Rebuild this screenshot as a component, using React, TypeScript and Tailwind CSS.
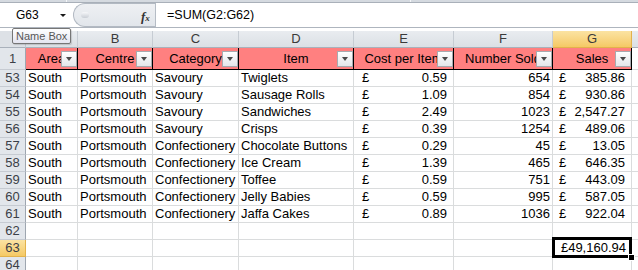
import React from "react";

type Col = { key: string; w: string; hdr: string };

const COLS: Col[] = [
  { key: "A", w: "w-[52px]", hdr: "Area" },
  { key: "B", w: "w-[75px]", hdr: "Centre" },
  { key: "C", w: "w-[86px]", hdr: "Category" },
  { key: "D", w: "w-[115px]", hdr: "Item" },
  { key: "E", w: "w-[100px]", hdr: "Cost per Item" },
  { key: "F", w: "w-[99px]", hdr: "Number Sold" },
  { key: "G", w: "w-[79px]", hdr: "Sales" },
];

type Row = {
  n: number;
  cat: string;
  item: string;
  cost: string;
  num: string;
  sales: string;
};

const ROWS: Row[] = [
  { n: 53, cat: "Savoury", item: "Twiglets", cost: "0.59", num: "654", sales: "385.86" },
  { n: 54, cat: "Savoury", item: "Sausage Rolls", cost: "1.09", num: "854", sales: "930.86" },
  { n: 55, cat: "Savoury", item: "Sandwiches", cost: "2.49", num: "1023", sales: "2,547.27" },
  { n: 56, cat: "Savoury", item: "Crisps", cost: "0.39", num: "1254", sales: "489.06" },
  { n: 57, cat: "Confectionery", item: "Chocolate Buttons", cost: "0.29", num: "45", sales: "13.05" },
  { n: 58, cat: "Confectionery", item: "Ice Cream", cost: "1.39", num: "465", sales: "646.35" },
  { n: 59, cat: "Confectionery", item: "Toffee", cost: "0.59", num: "751", sales: "443.09" },
  { n: 60, cat: "Confectionery", item: "Jelly Babies", cost: "0.59", num: "995", sales: "587.05" },
  { n: 61, cat: "Confectionery", item: "Jaffa Cakes", cost: "0.89", num: "1036", sales: "922.04" },
];

const cell =
  "h-[17px] shrink-0 border-r border-b border-[#dadcdd] overflow-hidden whitespace-nowrap leading-[16px] text-black";

function RowHeader({ n, sel }: { n: number; sel?: boolean }) {
  return (
    <div
      className={
        sel
          ? "w-[26px] h-[17px] shrink-0 border-r border-b border-[#e2b24c] bg-gradient-to-b from-[#fbe3a2] to-[#f5c964] text-center leading-[16px] text-[#3b3f47]"
          : "w-[26px] h-[17px] shrink-0 border-r border-b border-r-[#9ea6b0] border-b-[#c6cbd2] bg-[#e2e6eb] text-center leading-[16px] text-[#3b3f47]"
      }
    >
      {n}
    </div>
  );
}

function FilterBtn() {
  return (
    <div className="absolute right-0 bottom-[2px] w-[16px] h-[16px] border border-[#a7abb0] bg-gradient-to-b from-[#ffffff] to-[#e4e6e9] flex items-center justify-center">
      <div className="w-0 h-0 border-l-[3.5px] border-r-[3.5px] border-t-[4px] border-l-transparent border-r-transparent border-t-[#4a4a4a]" />
    </div>
  );
}

function DataRow({ r }: { r: Row }) {
  return (
    <div className="flex h-[17px]">
      <RowHeader n={r.n} />
      <div className={`${cell} w-[52px] pl-[2px]`}>South</div>
      <div className={`${cell} w-[75px] pl-[2px]`}>Portsmouth</div>
      <div className={`${cell} w-[86px] pl-[2px]`}>{r.cat}</div>
      <div className={`${cell} w-[115px] pl-[2px]`}>{r.item}</div>
      <div className={`${cell} w-[100px] pl-[8px] pr-[6px] flex justify-between`}>
        <span>£</span>
        <span>{r.cost}</span>
      </div>
      <div className={`${cell} w-[99px] pr-[2px] text-right`}>{r.num}</div>
      <div className={`${cell} w-[79px] pl-[6px] pr-[6px] flex justify-between`}>
        <span>£</span>
        <span>{r.sales}</span>
      </div>
      <div className={`${cell} flex-1 border-r-0`} />
    </div>
  );
}

function EmptyRow({ n, sel, total }: { n: number; sel?: boolean; total?: boolean }) {
  return (
    <div className="flex h-[17px]">
      <RowHeader n={n} sel={sel} />
      <div className={`${cell} w-[52px]`} />
      <div className={`${cell} w-[75px]`} />
      <div className={`${cell} w-[86px]`} />
      <div className={`${cell} w-[115px]`} />
      <div className={`${cell} w-[100px]`} />
      <div className={`${cell} w-[99px]`} />
      {total ? (
        <div className="relative h-[17px] w-[79px] shrink-0 border-r border-b border-[#dadcdd] leading-[16px] text-black">
          <div className="text-right pr-[5px] whitespace-nowrap overflow-hidden">£49,160.94</div>
          <div className="absolute left-[-1px] right-[-1px] top-[-3px] bottom-[-2px] border-[3px] border-black z-10" />
          <div className="absolute left-[75px] top-[14px] w-[7px] h-[7px] bg-black border border-white z-20" />
        </div>
      ) : (
        <div className={`${cell} w-[79px]`} />
      )}
      <div className={`${cell} flex-1 border-r-0`} />
    </div>
  );
}

export default function App() {
  return (
    <div className="relative w-[638px] h-[270px] overflow-hidden bg-white font-['Liberation_Sans',Arial,sans-serif] text-[13px]">
      {/* ribbon bottom strip */}
      <div className="flex h-[3px] bg-[#d5dae0] border-b border-[#a9b0b9]">
        <div className="w-[67px] border-r border-[#f4f6f8]" />
        <div className="w-[344px] border-r border-[#f4f6f8]" />
      </div>

      {/* formula bar */}
      <div className="flex h-[25px] bg-white border-b border-[#aeb5be]">
        <div className="relative w-[73px] h-full flex items-center">
          <span className="ml-[16px] text-[12px] text-black">G63</span>
          <div className="absolute left-[60px] top-[11px] w-0 h-0 border-l-[3px] border-r-[3px] border-t-[3px] border-l-transparent border-r-transparent border-t-[#1a1a1a]" />
        </div>
        <div className="relative w-[82px] h-full rounded-l-full border border-r-0 border-[#b2b9c2] bg-gradient-to-b from-[#eef0f3] to-[#e2e6eb]">
          <div className="absolute left-[7px] top-[8px] w-[8px] h-[6px] rounded-full bg-gradient-to-b from-[#f7f8fa] to-[#c9ced5]" />
          <span className="absolute left-[67px] top-[3px] font-['Liberation_Serif',serif] italic font-bold text-[13px] text-[#333]">
            f<span className="text-[9px]">x</span>
          </span>
        </div>
        <div className="flex-1 h-full border-l border-[#b5bcc5] pl-[11px] flex items-center text-[12.5px] text-black">
          =SUM(G2:G62)
        </div>
      </div>

      <div className="h-[3px] bg-white" />

      {/* column headers */}
      <div className="flex h-[17px]">
        <div className="w-[26px] h-[17px] shrink-0 border-r border-b border-r-[#c3c9d0] border-b-[#a9b1bb] bg-[#dde1e6]" />
        {COLS.map((c) =>
          c.key === "G" ? (
            <div
              key={c.key}
              className="w-[79px] h-[17px] shrink-0 border-r border-b border-[#e2b24c] bg-gradient-to-b from-[#fbe3a2] to-[#f5c964] text-center leading-[16px] text-[#3a3a3a]"
            >
              {c.key}
            </div>
          ) : (
            <div
              key={c.key}
              className={`${c.w} h-[17px] shrink-0 border-r border-b border-r-[#c6ccd3] border-b-[#a9b1bb] bg-gradient-to-b from-[#e9ecf0] to-[#dbe0e5] text-center leading-[16px] text-[#3a3a3a]`}
            >
              {c.key}
            </div>
          )
        )}
        <div className="flex-1 h-[17px] border-b border-[#a9b1bb] bg-gradient-to-b from-[#e9ecf0] to-[#dbe0e5]" />
      </div>

      {/* row 1: table headers */}
      <div className="flex h-[22px]">
        <div className="w-[26px] h-[22px] shrink-0 border-r border-b border-r-[#9ea6b0] border-b-[#c6cbd2] bg-[#e2e6eb] text-center leading-[21px] text-[#3b3f47]">
          1
        </div>
        {COLS.map((c) => (
          <div
            key={c.key}
            className={`${c.w} relative h-[22px] shrink-0 border-r border-b border-black bg-[#ff8080] text-center leading-[21px] text-black overflow-hidden whitespace-nowrap`}
          >
            {c.hdr}
            <FilterBtn />
          </div>
        ))}
        <div className="flex-1 h-[22px] border-b border-[#dadcdd]" />
      </div>

      {ROWS.map((r) => (
        <DataRow key={r.n} r={r} />
      ))}
      <EmptyRow n={62} />
      <EmptyRow n={63} sel total />
      <EmptyRow n={64} />

      {/* Name Box tooltip */}
      <div className="absolute left-[12px] top-[28px] w-[59px] h-[16px] rounded-[2px] border border-[#767676] bg-gradient-to-b from-[#ffffff] to-[#e4e5f0] pl-[3px] text-[11px] leading-[14px] text-[#575757] whitespace-nowrap shadow-[1px_1px_1px_rgba(0,0,0,0.15)] z-30">
        Name Box
      </div>
    </div>
  );
}
